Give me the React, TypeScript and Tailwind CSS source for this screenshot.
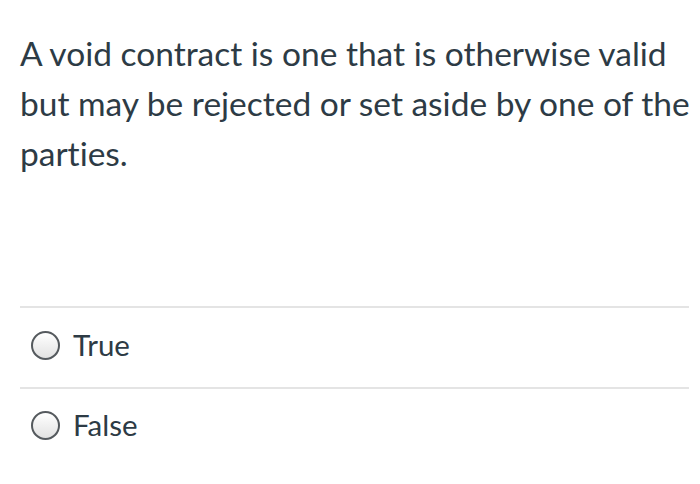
import React from "react";

function Radio() {
  return (
    <span className="inline-block w-[29px] h-[29px] rounded-full border-2 border-[#555a5e] bg-gradient-to-b from-white to-[#e2e2e2] shrink-0" />
  );
}

export default function App() {
  return (
    <div className="w-[700px] h-[484px] bg-white text-[#2d3b45] [font-variant-ligatures:none]" style={{ fontFamily: "Lato, 'Noto Sans', sans-serif" }}>
      <div className="pl-[20px] pr-[8px] pt-[28px]">
        <p className="text-[33.5px] leading-[50px] m-0">
          A void contract is one that is otherwise valid but may be rejected or set aside by one of the parties.
        </p>
      </div>
      <div className="mt-[128px] ml-[20px] mr-[11px]">
        <div className="border-t-2 border-[#e4e4e4] h-[81px] flex items-center gap-[13px] pl-[11px] pb-[5px]">
          <Radio />
          <span className="text-[29.5px]">True</span>
        </div>
        <div className="border-t-2 border-[#e4e4e4] h-[80px] flex items-center gap-[13px] pl-[11px] pb-[5px]">
          <Radio />
          <span className="text-[29.5px]">False</span>
        </div>
      </div>
    </div>
  );
}
